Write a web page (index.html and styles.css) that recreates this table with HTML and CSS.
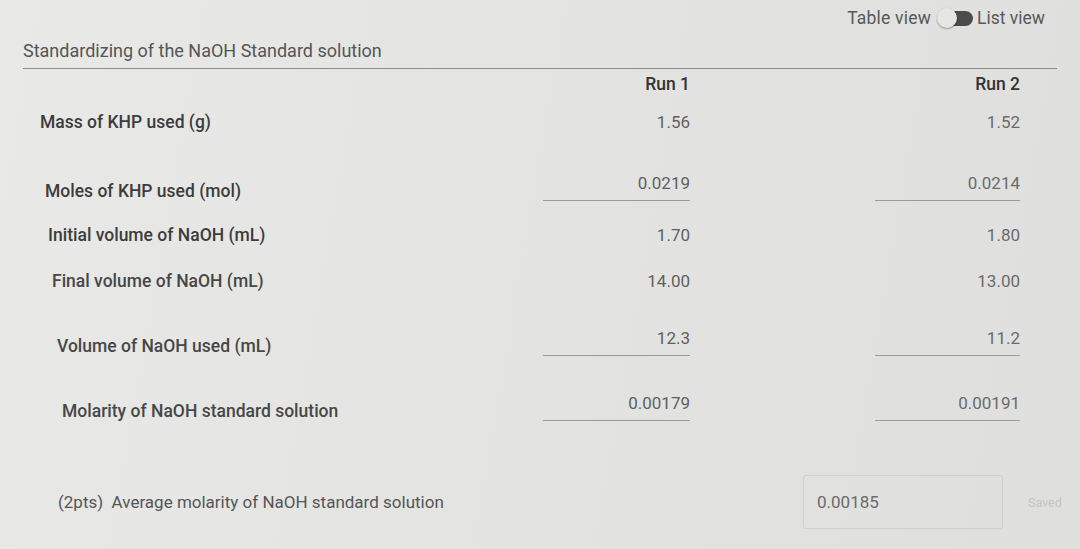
FILE: index.html
```html
<!DOCTYPE html>
<html>
<head>
<meta charset="utf-8">
<link rel="stylesheet" href="styles.css">
</head>
<body>
<div class="page">
  <div class="topbar">
    <span class="tv">Table view</span>
    <span class="switch"><span class="track"></span><span class="knob"></span></span>
    <span class="lv">List view</span>
  </div>
  <h1 class="title">Standardizing of the NaOH Standard solution</h1>
  <div class="table">
    <div class="row head">
      <div class="label"></div>
      <div class="val c1">Run 1</div>
      <div class="sp"></div>
      <div class="val c2">Run 2</div>
    </div>
    <div class="row plain r-mass">
      <div class="label i1">Mass of KHP used (g)</div>
      <div class="val c1">1.56</div>
      <div class="sp"></div>
      <div class="val c2">1.52</div>
    </div>
    <div class="row input r-moles">
      <div class="label i2">Moles of KHP used (mol)</div>
      <div class="val c1 field">0.0219</div>
      <div class="sp"></div>
      <div class="val c2 field">0.0214</div>
    </div>
    <div class="row plain r-init">
      <div class="label i3">Initial volume of NaOH (mL)</div>
      <div class="val c1">1.70</div>
      <div class="sp"></div>
      <div class="val c2">1.80</div>
    </div>
    <div class="row plain r-final">
      <div class="label i4">Final volume of NaOH (mL)</div>
      <div class="val c1">14.00</div>
      <div class="sp"></div>
      <div class="val c2">13.00</div>
    </div>
    <div class="row input r-vol">
      <div class="label i5">Volume of NaOH used (mL)</div>
      <div class="val c1 field">12.3</div>
      <div class="sp"></div>
      <div class="val c2 field">11.2</div>
    </div>
    <div class="row input r-mol">
      <div class="label i6">Molarity of NaOH standard solution</div>
      <div class="val c1 field">0.00179</div>
      <div class="sp"></div>
      <div class="val c2 field">0.00191</div>
    </div>
  </div>
  <div class="avg">
    <div class="avg-label">(2pts)&nbsp; Average molarity of NaOH standard solution</div>
    <div class="avg-box">0.00185</div>
    <div class="saved">Saved</div>
  </div>
</div>
</body>
</html>
```

FILE: styles.css
```css
* { box-sizing: border-box; }
html, body {
  margin: 0;
  padding: 0;
  width: 1080px;
  height: 549px;
  overflow: hidden;
}
body {
  font-family: Roboto, "Liberation Sans", sans-serif;
  background: linear-gradient(100deg, #e9eae8 0%, #e4e5e3 40%, #dfe0de 100%);
  color: #444;
}
.topbar {
  height: 34px;
  display: flex;
  align-items: center;
  justify-content: flex-end;
  padding-right: 35px;
  padding-top: 1px;
  font-size: 17.5px;
  color: #585858;
}
.tv { letter-spacing: 0.2px; }
.switch {
  position: relative;
  width: 38px;
  height: 20px;
  margin: 0 2px 0 6px;
  display: inline-block;
}
.track {
  position: absolute;
  left: 14px;
  top: 3px;
  width: 22px;
  height: 15px;
  border-radius: 0 8px 8px 0;
  background: #4c4c4c;
}
.knob {
  position: absolute;
  left: 0;
  top: 0;
  width: 20px;
  height: 20px;
  border-radius: 50%;
  background: #e6e6e4;
  box-shadow: 0 1px 2px rgba(0,0,0,0.35);
}
.title {
  margin: 6px 23px 0 23px;
  padding-bottom: 6px;
  font-size: 18px;
  font-weight: 400;
  color: #555;
  border-bottom: 1px solid #8c8c8c;
  line-height: 22px;
}
.table {
  display: flex;
  flex-direction: column;
}
.row {
  display: grid;
  grid-template-columns: 543px 147px 180px 150px;
}
.label {
  font-size: 17.5px;
  font-weight: 500;
  color: #3c3c3c;
  line-height: 20px;
}
.val {
  text-align: right;
  font-size: 17px;
  line-height: 20px;
  color: #5f5f5f;
}
.c2 { color: #6a6a6a; }
.head .val { font-weight: 500; color: #333; font-size: 17.5px; }
.head { height: 28px; align-items: center; margin-top: 1px; }
.plain { align-items: center; }
.r-mass { height: 36px; margin-top: 6px; }
.r-init { height: 26px; margin-top: 21px; }
.r-final { height: 26px; margin-top: 20px; }
.input { height: 40px; }
.r-moles { margin-top: 21px; }
.r-vol { margin-top: 22px; }
.r-mol { margin-top: 25px; }
.input .label { align-self: end; padding-bottom: 0; }
.field {
  align-self: end;
  border-bottom: 1px solid #9b9b9b;
  padding-bottom: 7px;
}
.c2.field { margin-left: 5px; }
.i1 { padding-left: 40px; }
.i2 { padding-left: 45px; }
.i3 { padding-left: 48px; }
.i4 { padding-left: 52px; }
.i5 { padding-left: 57px; }
.i6 { padding-left: 62px; }
.i4, .i5, .i6 { color: #474747; }
.avg {
  margin-top: 54px;
  display: flex;
  align-items: center;
  height: 54px;
}
.avg-label {
  width: 803px;
  padding-left: 58px;
  font-size: 17px;
  color: #555;
}
.avg-box {
  width: 200px;
  height: 54px;
  border: 1px solid #cfd0ce;
  border-radius: 3px;
  display: flex;
  align-items: center;
  padding-left: 13px;
  font-size: 17px;
  color: #6a6a6a;
}
.saved {
  margin-left: 25px;
  font-size: 12.5px;
  color: #c4c5c3;
}
```
